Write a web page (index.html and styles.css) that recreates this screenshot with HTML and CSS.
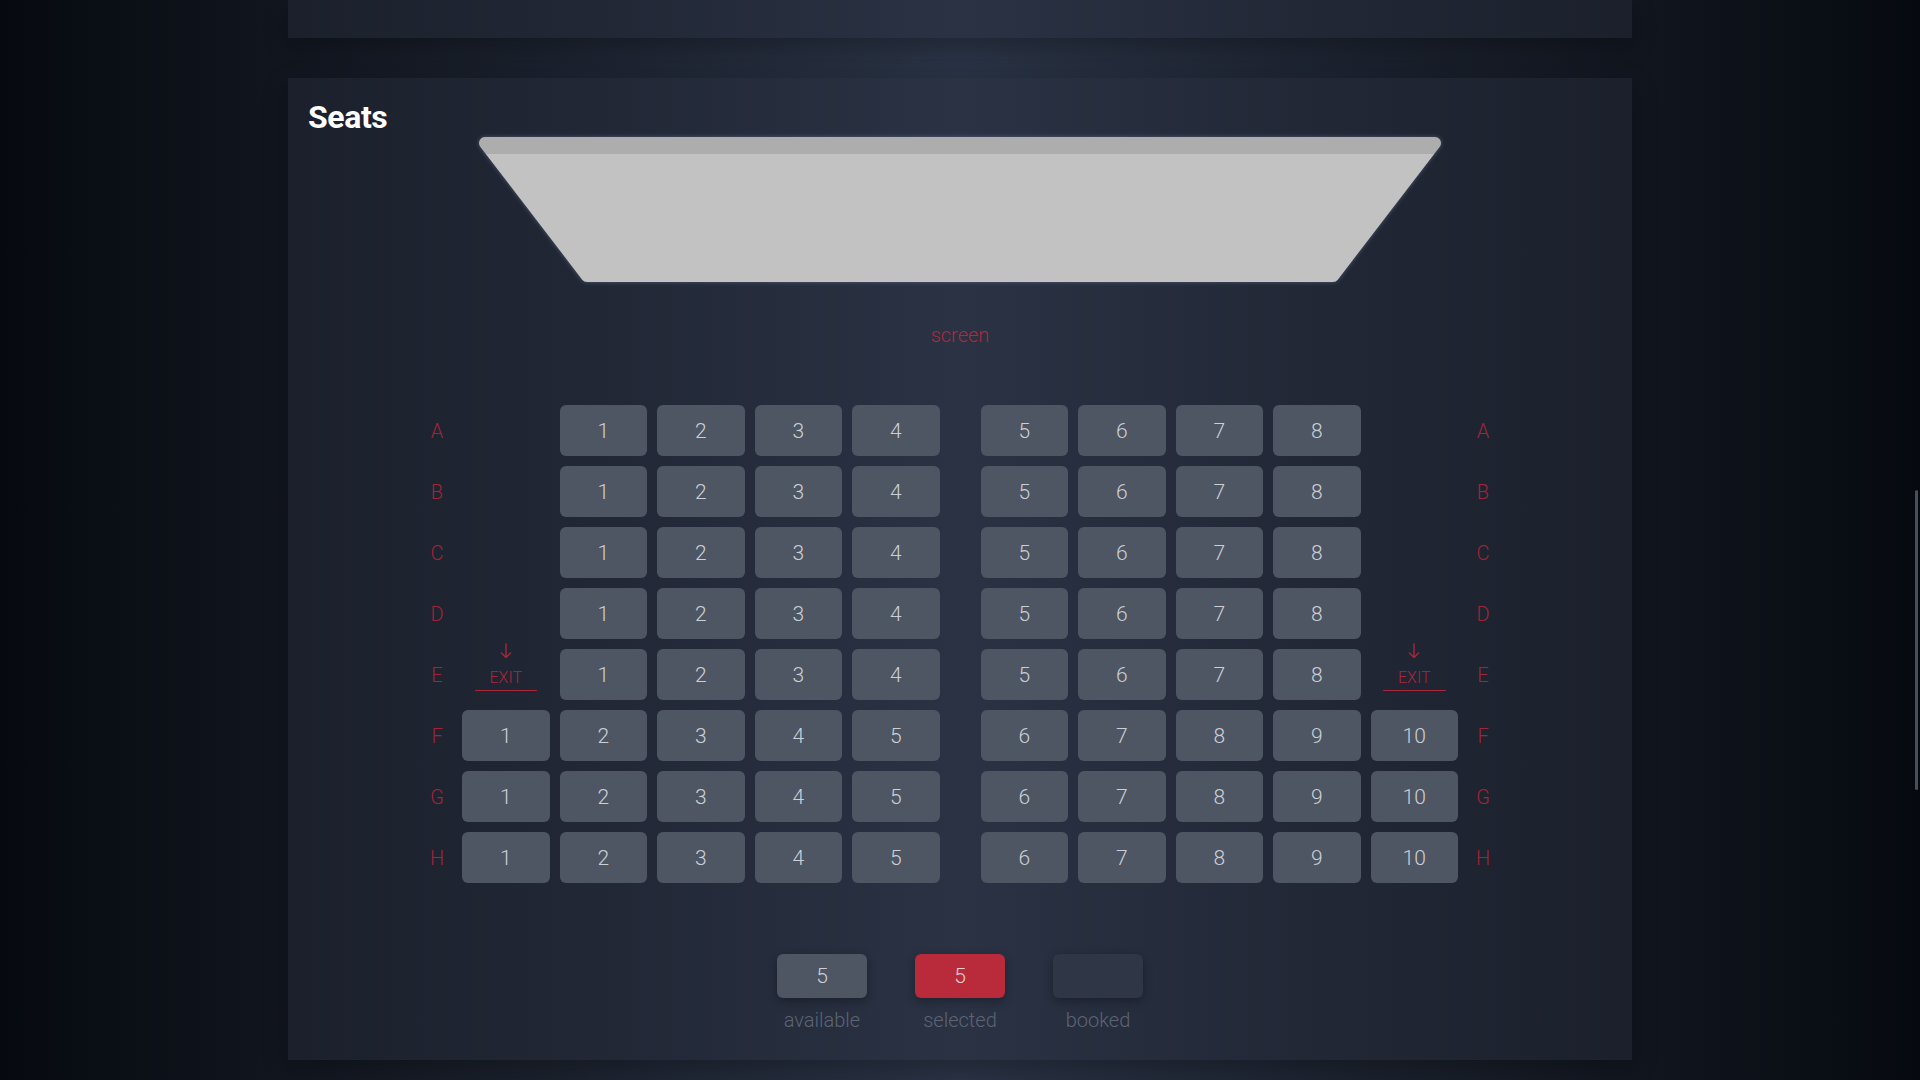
FILE: index.html
```html
<!DOCTYPE html>
<html lang="en">
<head>
<meta charset="utf-8">
<title>Seats</title>
<link rel="stylesheet" href="styles.css">
</head>
<body>
<div class="page">
  <div class="card card--top"></div>
  <section class="card card--seats">
    <h2 class="title">Seats</h2>
    <div class="screen">
      <svg width="962" height="145" viewBox="0 0 962 145">
        <defs>
          <linearGradient id="scr" gradientUnits="userSpaceOnUse" x1="0" y1="0" x2="0" y2="145">
            <stop offset="0" stop-color="#adadad"/>
            <stop offset="0.117" stop-color="#adadad"/>
            <stop offset="0.117" stop-color="#c2c2c2"/>
            <stop offset="1" stop-color="#c2c2c2"/>
          </linearGradient>
        </defs>
        <polygon points="6,6 956,6 854,139 108,139" fill="url(#scr)" stroke="url(#scr)" stroke-width="12" stroke-linejoin="round"/>
      </svg>
    </div>
    <div class="screen-label">screen</div>

    <div class="seatmap">
      <!-- Row A -->
      <div class="row-label">A</div>
      <div class="cell"></div>
      <div class="seat">1</div><div class="seat">2</div><div class="seat">3</div><div class="seat">4</div>
      <div class="aisle"></div>
      <div class="seat">5</div><div class="seat">6</div><div class="seat">7</div><div class="seat">8</div>
      <div class="cell"></div>
      <div class="row-label">A</div>
      <!-- Row B -->
      <div class="row-label">B</div>
      <div class="cell"></div>
      <div class="seat">1</div><div class="seat">2</div><div class="seat">3</div><div class="seat">4</div>
      <div class="aisle"></div>
      <div class="seat">5</div><div class="seat">6</div><div class="seat">7</div><div class="seat">8</div>
      <div class="cell"></div>
      <div class="row-label">B</div>
      <!-- Row C -->
      <div class="row-label">C</div>
      <div class="cell"></div>
      <div class="seat">1</div><div class="seat">2</div><div class="seat">3</div><div class="seat">4</div>
      <div class="aisle"></div>
      <div class="seat">5</div><div class="seat">6</div><div class="seat">7</div><div class="seat">8</div>
      <div class="cell"></div>
      <div class="row-label">C</div>
      <!-- Row D -->
      <div class="row-label">D</div>
      <div class="cell"></div>
      <div class="seat">1</div><div class="seat">2</div><div class="seat">3</div><div class="seat">4</div>
      <div class="aisle"></div>
      <div class="seat">5</div><div class="seat">6</div><div class="seat">7</div><div class="seat">8</div>
      <div class="cell"></div>
      <div class="row-label">D</div>
      <!-- Row E -->
      <div class="row-label">E</div>
      <div class="cell">
        <div class="exit">
          <svg class="exit-arrow" width="12" height="16" viewBox="0 0 12 16"><path d="M6 1 V14.5 M1.5 10 L6 14.5 L10.5 10" fill="none" stroke="currentColor" stroke-width="1.4" stroke-linecap="round" stroke-linejoin="round"/></svg>
          <span class="exit-text">EXIT</span>
        </div>
      </div>
      <div class="seat">1</div><div class="seat">2</div><div class="seat">3</div><div class="seat">4</div>
      <div class="aisle"></div>
      <div class="seat">5</div><div class="seat">6</div><div class="seat">7</div><div class="seat">8</div>
      <div class="cell">
        <div class="exit">
          <svg class="exit-arrow" width="12" height="16" viewBox="0 0 12 16"><path d="M6 1 V14.5 M1.5 10 L6 14.5 L10.5 10" fill="none" stroke="currentColor" stroke-width="1.4" stroke-linecap="round" stroke-linejoin="round"/></svg>
          <span class="exit-text">EXIT</span>
        </div>
      </div>
      <div class="row-label">E</div>
      <!-- Row F -->
      <div class="row-label">F</div>
      <div class="seat">1</div><div class="seat">2</div><div class="seat">3</div><div class="seat">4</div><div class="seat">5</div>
      <div class="aisle"></div>
      <div class="seat">6</div><div class="seat">7</div><div class="seat">8</div><div class="seat">9</div><div class="seat">10</div>
      <div class="row-label">F</div>
      <!-- Row G -->
      <div class="row-label">G</div>
      <div class="seat">1</div><div class="seat">2</div><div class="seat">3</div><div class="seat">4</div><div class="seat">5</div>
      <div class="aisle"></div>
      <div class="seat">6</div><div class="seat">7</div><div class="seat">8</div><div class="seat">9</div><div class="seat">10</div>
      <div class="row-label">G</div>
      <!-- Row H -->
      <div class="row-label">H</div>
      <div class="seat">1</div><div class="seat">2</div><div class="seat">3</div><div class="seat">4</div><div class="seat">5</div>
      <div class="aisle"></div>
      <div class="seat">6</div><div class="seat">7</div><div class="seat">8</div><div class="seat">9</div><div class="seat">10</div>
      <div class="row-label">H</div>
    </div>

    <div class="legend">
      <div class="legend-item">
        <div class="legend-box legend-box--available">5</div>
        <div class="legend-label">available</div>
      </div>
      <div class="legend-item">
        <div class="legend-box legend-box--selected">5</div>
        <div class="legend-label">selected</div>
      </div>
      <div class="legend-item">
        <div class="legend-box legend-box--booked"></div>
        <div class="legend-label">booked</div>
      </div>
    </div>
  </section>
</div>
<div class="scroll-thumb"></div>
</body>
</html>
```

FILE: styles.css
```css
html, body {
  margin: 0;
  padding: 0;
}

body {
  min-height: 1080px;
  background: linear-gradient(to right, #060a10 0%, #151a24 20%, #2a3345 50%, #151a24 80%, #060a10 100%);
  font-family: Roboto, "Noto Sans", "Liberation Sans", sans-serif;
  color: #c5cad2;
  overflow: hidden;
}

.page {
  width: 1344px;
  margin: 0 auto;
  display: flex;
  flex-direction: column;
  gap: 40px;
}

.card {
  background: linear-gradient(to right, #1b202c 0%, #222836 25%, #2a3244 50%, #222836 75%, #1b202c 100%);
  box-shadow: 0 8px 24px rgba(0, 0, 0, 0.25);
  box-sizing: border-box;
}

.card--top {
  height: 38px;
}

.card--seats {
  height: 982px;
  padding: 20px 20px 0;
  display: flex;
  flex-direction: column;
}

.title {
  margin: 0;
  font-size: 32px;
  line-height: 39px;
  font-weight: 700;
  letter-spacing: -0.4px;
  color: #ffffff;
}

.screen {
  display: flex;
  justify-content: center;
  height: 145px;
}

.screen svg {
  display: block;
  filter: drop-shadow(0 0 2px rgba(170, 185, 225, 0.35));
}

.screen-label {
  margin-top: 41px;
  text-align: center;
  font-size: 20px;
  line-height: 24px;
  font-weight: 300;
  color: #b0293b;
}

.seatmap {
  margin-top: 58px;
  display: grid;
  grid-template-columns: 30px repeat(5, 87.5px) 21px repeat(5, 87.5px) 30px;
  grid-auto-rows: 51px;
  column-gap: 10px;
  row-gap: 10px;
  justify-content: center;
}

.row-label {
  display: flex;
  align-items: center;
  justify-content: center;
  font-size: 20px;
  font-weight: 300;
  color: #a02637;
}

.seat {
  display: flex;
  align-items: center;
  justify-content: center;
  background: #4f5663;
  border-radius: 6px;
  font-size: 21px;
  font-weight: 300;
  color: #cbd0d7;
}

.cell {
  display: flex;
  align-items: center;
  justify-content: center;
}

.exit {
  display: flex;
  flex-direction: column;
  align-items: center;
  margin-bottom: 16px;
  color: #a8283a;
}

.exit-arrow {
  display: block;
  margin-bottom: 8px;
}

.exit-text {
  font-size: 16px;
  line-height: 22px;
  font-weight: 300;
  padding: 0 15px 1px;
  border-bottom: 1.5px solid #a8283a;
}

.legend {
  margin-top: 71px;
  display: flex;
  justify-content: center;
  gap: 48px;
}

.legend-item {
  display: flex;
  flex-direction: column;
  align-items: center;
}

.legend-box {
  width: 90px;
  height: 44px;
  border-radius: 6px;
  display: flex;
  align-items: center;
  justify-content: center;
  font-size: 21px;
  font-weight: 300;
  color: #cbd0d7;
  box-shadow: 0 3px 10px rgba(0, 0, 0, 0.3);
}

.legend-box--available {
  background: #4f5663;
}

.legend-box--selected {
  background: #b92a3b;
  color: #e8cdd1;
}

.legend-box--booked {
  background: #2f3646;
}

.legend-label {
  margin-top: 10px;
  font-size: 20px;
  line-height: 24px;
  font-weight: 300;
  color: #5d6473;
}

.scroll-thumb {
  position: fixed;
  right: 2px;
  top: 490px;
  width: 3px;
  height: 300px;
  border-radius: 2px;
  background: #474e5c;
}
```
